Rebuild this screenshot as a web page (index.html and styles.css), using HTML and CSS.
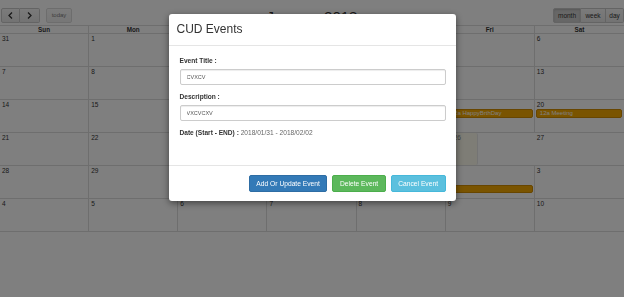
FILE: index.html
```html
<!DOCTYPE html>
<html lang="en">
<head>
  <meta charset="UTF-8" />
  <title>Calendar - CUD Events</title>
  <link rel="stylesheet" href="styles.css">
</head>
<body>
  <div class="calendar">
    <div class="toolbar">
      <div class="tb-left">
        <div class="btn-group">
          <button class="fc-btn arrow">
            <svg width="5" height="7" viewBox="0 0 5 7"><polyline points="4,0.5 1,3.5 4,6.5" fill="none" stroke="#333" stroke-width="1.3"/></svg>
          </button>
          <button class="fc-btn arrow next">
            <svg width="5" height="7" viewBox="0 0 5 7"><polyline points="1,0.5 4,3.5 1,6.5" fill="none" stroke="#333" stroke-width="1.3"/></svg>
          </button>
        </div>
        <button class="fc-btn today" disabled>today</button>
      </div>
      <h2 class="title">January 2018</h2>
      <div class="tb-right">
        <div class="btn-group">
          <button class="fc-btn view active">month</button>
          <button class="fc-btn view">week</button>
          <button class="fc-btn view">day</button>
        </div>
      </div>
    </div>

    <div class="head">
      <div>Sun</div><div>Mon</div><div>Tue</div><div>Wed</div><div>Thu</div><div>Fri</div><div>Sat</div>
    </div>

    <div class="week">
      <div class="day">31</div><div class="day">1</div><div class="day">2</div><div class="day">3</div><div class="day">4</div><div class="day">5</div><div class="day">6</div>
    </div>
    <div class="week">
      <div class="day">7</div><div class="day">8</div><div class="day">9</div><div class="day">10</div><div class="day">11</div><div class="day">12</div><div class="day">13</div>
    </div>
    <div class="week">
      <div class="day">14</div><div class="day">15</div><div class="day">16</div><div class="day">17</div><div class="day">18</div><div class="day">19</div><div class="day">20</div>
      <div class="event" style="grid-column: 6 / 7">12a HappyBrthDay</div>
      <div class="event" style="grid-column: 7 / 8">12a Meeting</div>
    </div>
    <div class="week">
      <div class="day">21</div><div class="day">22</div><div class="day">23</div><div class="day">24</div><div class="day">25</div><div class="day today">26</div><div class="day">27</div>
    </div>
    <div class="week">
      <div class="day">28</div><div class="day">29</div><div class="day">30</div><div class="day">31</div><div class="day">1</div><div class="day">2</div><div class="day">3</div>
      <div class="event" style="grid-column: 4 / 5">12a Party</div>
      <div class="event slot2" style="grid-column: 4 / 7">12a cvxcv</div>
    </div>
    <div class="week">
      <div class="day">4</div><div class="day">5</div><div class="day">6</div><div class="day">7</div><div class="day">8</div><div class="day">9</div><div class="day">10</div>
    </div>
  </div>

  <!-- modal -->
  <div class="backdrop">
    <div class="modal">
      <div class="modal-header">
        <h4 class="modal-title">CUD Events</h4>
      </div>
      <div class="modal-body">
        <div class="form-group">
          <label>Event Title :</label>
          <input type="text" class="form-control" value="CVXCV">
        </div>
        <div class="form-group">
          <label>Description :</label>
          <input type="text" class="form-control" value="VXCVCXV">
        </div>
        <div class="date-line"><b>Date (Start - END) :</b> 2018/01/31 - 2018/02/02</div>
      </div>
      <div class="modal-footer">
        <button class="btn btn-primary">Add Or Update Event</button>
        <button class="btn btn-success">Delete Event</button>
        <button class="btn btn-info">Cancel Event</button>
      </div>
    </div>
  </div>
</body>
</html>
```

FILE: styles.css
```css
* { box-sizing: border-box; }
html, body {
  margin: 0;
  padding: 0;
  background: #fff;
  overflow: hidden;
}
body {
  font-family: "Liberation Sans", Arial, sans-serif;
  color: #333;
  width: 624px;
  height: 297px;
}

/* toolbar */
.toolbar {
  display: grid;
  grid-template-columns: 1fr auto 1fr;
  align-items: start;
  height: 25px;
  padding-top: 8px;
}
.tb-left { display: flex; padding-left: 1px; }
.tb-right { display: flex; justify-content: flex-end; }
.btn-group { display: flex; }
.fc-btn {
  height: 15px;
  margin: 0;
  padding: 0 4px;
  border: 1px solid #c8c8c8;
  background: linear-gradient(#f6f6f6, #e6e6e6);
  color: #333;
  font-family: "Liberation Sans", Arial, sans-serif;
  font-size: 6.5px;
  line-height: 13px;
  display: flex;
  align-items: center;
  justify-content: center;
}
.btn-group .fc-btn + .fc-btn { border-left: none; }
.btn-group .fc-btn:first-child { border-radius: 2px 0 0 2px; }
.btn-group .fc-btn:last-child { border-radius: 0 2px 2px 0; }
.arrow { width: 19px; }
.arrow.next { width: 20px; }
.today {
  margin-left: 6px;
  width: 26px;
  border-radius: 2px;
  opacity: 0.65;
  font-size: 6px;
}
.view { width: 25px; }
.view.active {
  width: 28px;
  background: #cfcfcf;
  box-shadow: inset 0 1px 2px rgba(0,0,0,0.15);
}
.view:last-child { width: 18px; }
.title {
  margin: 0;
  font-size: 15px;
  line-height: 17px;
  font-weight: normal;
  color: #333;
}

/* grid */
.head {
  display: grid;
  grid-template-columns: repeat(7, 1fr);
  border-top: 1px solid #ddd;
  border-bottom: 1px solid #ddd;
}
.head div {
  text-align: center;
  font-weight: bold;
  font-size: 6.3px;
  line-height: 7px;
  border-right: 1px solid #ddd;
  color: #333;
}
.week {
  display: grid;
  grid-template-columns: repeat(7, 1fr);
  grid-template-rows: 9px 10px 10px 1fr;
  height: 33px;
  border-bottom: 1px solid #ddd;
}
.day {
  grid-row: 1 / 5;
  border-right: 1px solid #ddd;
  font-size: 6.5px;
  line-height: 8px;
  padding: 1px 2px;
  color: #333;
}
.day:nth-child(1) { grid-column: 1; }
.day:nth-child(2) { grid-column: 2; }
.day:nth-child(3) { grid-column: 3; }
.day:nth-child(4) { grid-column: 4; }
.day:nth-child(5) { grid-column: 5; }
.day:nth-child(6) { grid-column: 6; }
.day:nth-child(7) { grid-column: 7; border-right: none; }
.head div:last-child { border-right: none; }
.day.today { background: #fcf8e3; }
.event {
  grid-row: 2;
  height: 9px;
  margin: 0 2px 0 1px;
  padding-left: 3px;
  background: #f5a800;
  border: 1px solid #d08c00;
  border-radius: 2px;
  color: #fff;
  font-size: 6px;
  line-height: 7px;
  white-space: nowrap;
  overflow: hidden;
}
.event.slot2 { grid-row: 3; height: 8px; }

/* modal */
.backdrop {
  position: fixed;
  left: 0;
  top: 0;
  width: 100%;
  height: 100%;
  background: rgba(0,0,0,0.5);
}
.modal {
  width: 287px;
  margin: 14px auto 0;
  background: #fff;
  border-radius: 3px;
  box-shadow: 0 2px 7px rgba(0,0,0,0.5);
}
.modal-header {
  padding: 8px 8px 9px;
  border-bottom: 1px solid #e5e5e5;
}
.modal-title {
  margin: 0;
  font-size: 12px;
  line-height: 14px;
  font-weight: normal;
  color: #333;
}
.modal-body {
  padding: 11px 10px 28px 11px;
}
.form-group { margin-bottom: 8px; }
.form-group label {
  display: block;
  font-size: 6.6px;
  line-height: 8px;
  font-weight: bold;
  margin-bottom: 4px;
}
.form-control {
  display: block;
  width: 100%;
  height: 16px;
  margin: 0;
  padding: 0 6px;
  border: 1px solid #ccc;
  border-radius: 2px;
  box-shadow: inset 0 1px 1px rgba(0,0,0,0.075);
  font-family: "Liberation Sans", Arial, sans-serif;
  font-size: 5.5px;
  color: #555;
  outline: none;
}
.date-line {
  margin-top: 1px;
  font-size: 6.6px;
  line-height: 8px;
  color: #666;
}
.date-line b { color: #333; }
.modal-footer {
  display: flex;
  justify-content: flex-end;
  gap: 5px;
  padding: 9px 10px 9px;
  border-top: 1px solid #e5e5e5;
}
.btn {
  height: 17px;
  margin: 0;
  padding: 0 6.5px;
  border: 1px solid transparent;
  border-radius: 2px;
  color: #fff;
  font-family: "Liberation Sans", Arial, sans-serif;
  font-size: 6.7px;
}
.btn-primary { background: #337ab7; border-color: #2e6da4; }
.btn-success { background: #5cb85c; border-color: #4cae4c; }
.btn-info { background: #5bc0de; border-color: #46b8da; }
```
